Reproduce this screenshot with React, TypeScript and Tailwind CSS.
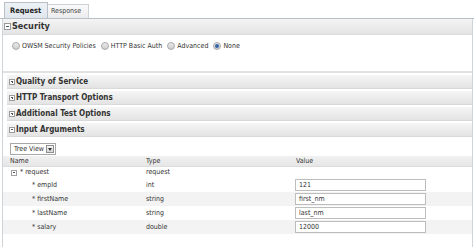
import React from "react";

const font = { fontFamily: "'DejaVu Sans Condensed', 'Liberation Sans', sans-serif" };

function ToggleBox({ open, big }: { open: boolean; big?: boolean }) {
  return (
    <span
      className={`relative inline-flex items-center justify-center border border-[#9a9a9a] bg-white shrink-0 ${
        big ? "w-[7px] h-[7px]" : "w-[6px] h-[6px]"
      }`}
    >
      <span className={`absolute h-px bg-[#555] ${big ? "w-[3px]" : "w-[2px]"}`} />
      {!open && <span className={`absolute w-px bg-[#555] ${big ? "h-[3px]" : "h-[2px]"}`} />}
    </span>
  );
}

function Header({ title, open }: { title: string; open: boolean }) {
  return (
    <div className="h-[14px] flex items-center pl-[2px] bg-gradient-to-b from-[#f6f6f6] to-[#e3e3e3] border-b border-[#d9d9d9] text-[8px] font-bold text-[#333]">
      <ToggleBox open={open} />
      <span className="ml-[1px] leading-none">{title}</span>
    </div>
  );
}

function Radio({ checked, label }: { checked?: boolean; label: string }) {
  return (
    <label className="flex items-center mr-[5px]">
      <span className="w-[8px] h-[8px] rounded-full border border-[#a9a9a9] bg-gradient-to-b from-[#ececec] to-[#cdcdcd] flex items-center justify-center mr-[2px]">
        {checked && <span className="w-[4px] h-[4px] rounded-full bg-[#3566a6]" />}
      </span>
      <span className="leading-none">{label}</span>
    </label>
  );
}

const rows = [
  { name: "empId", type: "int", value: "121" },
  { name: "firstName", type: "string", value: "first_nm" },
  { name: "lastName", type: "string", value: "last_nm" },
  { name: "salary", type: "double", value: "12000" },
];

export default function App() {
  return (
    <div className="w-[474px] h-[247px] bg-white overflow-hidden text-[7px] text-[#333]" style={font}>
      {/* tabs */}
      <div className="flex items-end h-[19px] pl-[4px] border-b border-[#b7c0c8]">
        <div className="h-[16px] w-[44px] pl-[5px] flex items-center bg-gradient-to-b from-[#eef2f5] to-[#dfe6ec] border border-b-0 border-[#b7c0c8] font-bold text-[#222] text-[7.5px]">
          Request
        </div>
        <div className="h-[14px] w-[41px] pl-[3px] flex items-center bg-gradient-to-b from-[#fafafa] to-[#ececec] border border-b-0 border-l-0 border-[#cdd2d6] text-[#444]">
          Response
        </div>
      </div>
      <div className="ml-[2px] w-[471px] h-[228px] border-l border-r border-[#cfd4d9] flex flex-col">
        {/* Security */}
        <div className="h-[16px] flex items-center pl-[1px] bg-gradient-to-b from-[#f4f4f4] to-[#e4e4e4] border-b border-[#dadada] text-[9px] font-bold text-[#333]">
          <ToggleBox open big />
          <span className="ml-[1px] leading-none">Security</span>
        </div>
        <div className="h-[38px] flex items-start pt-[7px] pl-[9px] border-b-2 border-[#e2e2e2]">
          <Radio label="OWSM Security Policies" />
          <Radio label="HTTP Basic Auth" />
          <Radio label="Advanced" />
          <Radio label="None" checked />
        </div>
        <div className="pl-[4px] pt-[2px] flex flex-col gap-[2px]">
          <Header title="Quality of Service" open={false} />
          <Header title="HTTP Transport Options" open={false} />
          <Header title="Additional Test Options" open={false} />
          <Header title="Input Arguments" open />
        </div>
        <div className="pl-[7px] pt-[6px]">
          <div className="flex items-center h-[12px] w-[46px] border border-[#a8a8a8] bg-white">
            <span className="pl-[3px] flex-1 leading-none">Tree View</span>
            <span className="w-[8px] h-[8px] mr-[1px] border border-[#8f8f8f] bg-gradient-to-b from-[#f7f7f7] to-[#d8d8d8] flex items-center justify-center">
              <svg width="4" height="3" viewBox="0 0 4 3">
                <path d="M0 0h4L2 3z" fill="#333" />
              </svg>
            </span>
          </div>
        </div>
        <div className="mt-[1px] h-[11px] flex items-center bg-gradient-to-b from-[#f1f1f1] to-[#e6e6e6] border-b border-[#dddddd]">
          <span className="w-[140px] pl-[7px] leading-none">Name</span>
          <span className="w-[150px] pl-[3px] leading-none">Type</span>
          <span className="leading-none pl-[3px]">Value</span>
        </div>
        <div className="h-[11px] flex items-center">
          <span className="w-[140px] pl-[8px] flex items-center">
            <span className="relative inline-flex items-center justify-center w-[6px] h-[6px] border border-[#a0a0a0] mr-[3px]">
              <span className="absolute w-[2px] h-px bg-[#555]" />
            </span>
            <span className="leading-none text-[#333]">* request</span>
          </span>
          <span className="pl-[3px] leading-none">request</span>
        </div>
        {rows.map((r, i) => (
          <div
            key={r.name}
            className={`h-[14px] flex items-center text-[#333] ${i % 2 === 1 ? "bg-[#f3f3f3]" : "bg-white"}`}
          >
            <span className="w-[140px] pl-[29px] leading-none">* {r.name}</span>
            <span className="w-[152px] pl-[3px] leading-none">{r.type}</span>
            <span className="w-[131px] h-[12px] border border-[#bdbdbd] bg-white flex items-center pl-[3px] leading-none">
              {r.value}
            </span>
          </div>
        ))}
      </div>
    </div>
  );
}
